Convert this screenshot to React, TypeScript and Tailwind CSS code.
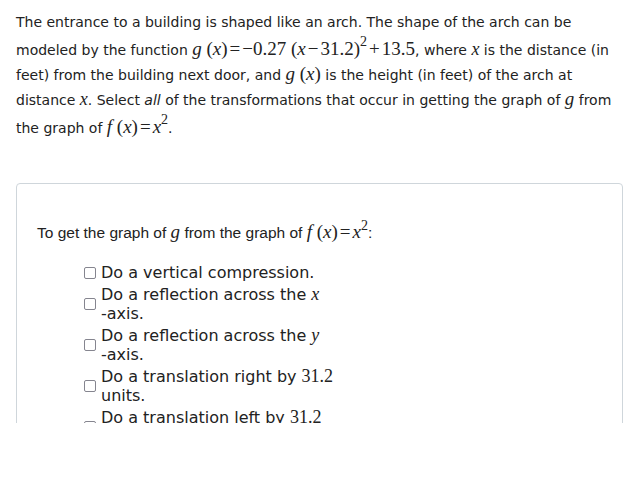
const serif = "font-['Liberation_Serif',serif]";

function V({ children }: { children: React.ReactNode }) {
  return <span className={`${serif} italic`}>{children}</span>;
}

function M({ children, size = "text-[19px]" }: { children: React.ReactNode; size?: string }) {
  return <span className={`${serif} ${size} leading-none whitespace-nowrap`}>{children}</span>;
}

function Sup({ children }: { children: React.ReactNode }) {
  return <span className="align-[9px] text-[14px] leading-none">{children}</span>;
}

function Op({ children }: { children: React.ReactNode }) {
  return <span className="px-[2px]">{children}</span>;
}

function Box() {
  return <span className="h-[12px] w-[12px] shrink-0 rounded-[2px] border-[1.5px] border-[#85858f] bg-white" />;
}

const items: React.ReactNode[] = [
  <>Do a vertical compression.</>,
  <>
    Do a reflection across the <M size="text-[18px]"><V>x</V></M> <span className="whitespace-nowrap">-axis.</span>
  </>,
  <>
    Do a reflection across the <M size="text-[18px]"><V>y</V></M> <span className="whitespace-nowrap">-axis.</span>
  </>,
  <>
    Do a translation right by <M size="text-[18px]">31.2</M> units.
  </>,
  <>
    Do a translation left by <M size="text-[18px]">31.2</M> units.
  </>,
];

export default function App() {
  return (
    <div className="h-[423px] overflow-hidden bg-white text-[#222]">
      <p className="px-4 pt-[10px] text-[14px] leading-[25px] font-['DejaVu_Sans',sans-serif]">
        The entrance to a building is shaped like an arch. The shape of the arch can be modeled by the function{" "}
        <M>
          <V>g</V> (<V>x</V>)<Op>=</Op>−0.27 (<V>x</V>
          <Op>−</Op>31.2)<Sup>2</Sup>
          <Op>+</Op>13.5
        </M>
        , where <M size="text-[18px]"><V>x</V></M> is the distance (in feet) from the building next door, and{" "}
        <M>
          <V>g</V> (<V>x</V>)
        </M>{" "}
        is the height (in feet) of the arch at distance <M size="text-[18px]"><V>x</V></M>. Select <i>all</i> of the
        transformations that occur in getting the graph of <M><V>g</V></M> from the graph of{" "}
        <M>
          <V>f</V> (<V>x</V>)<Op>=</Op>
          <V>x</V>
          <Sup>2</Sup>
        </M>
        .
      </p>

      <div className="ml-4 mt-[42px] w-[607px] rounded-[4px] border border-[#cfd6db] px-5 pt-[38px] pb-6">
        <p className="text-[15.5px] leading-[20px] font-['Liberation_Sans',sans-serif]">
          To get the graph of <M><V>g</V></M> from the graph of{" "}
          <M>
            <V>f</V> (<V>x</V>)<Op>=</Op>
            <V>x</V>
            <span className="relative -top-[8px] text-[14px] leading-none">2</span>
          </M>
          :
        </p>

        <ul className="mt-[20px] flex flex-col gap-[2px] pl-[47px] text-[16px] leading-[19.5px] font-['DejaVu_Sans',sans-serif]">
          {items.map((it, i) => (
            <li key={i} className="flex items-center gap-[5px]">
              <Box />
              <span className="w-[240px]">{it}</span>
            </li>
          ))}
        </ul>
      </div>
    </div>
  );
}
